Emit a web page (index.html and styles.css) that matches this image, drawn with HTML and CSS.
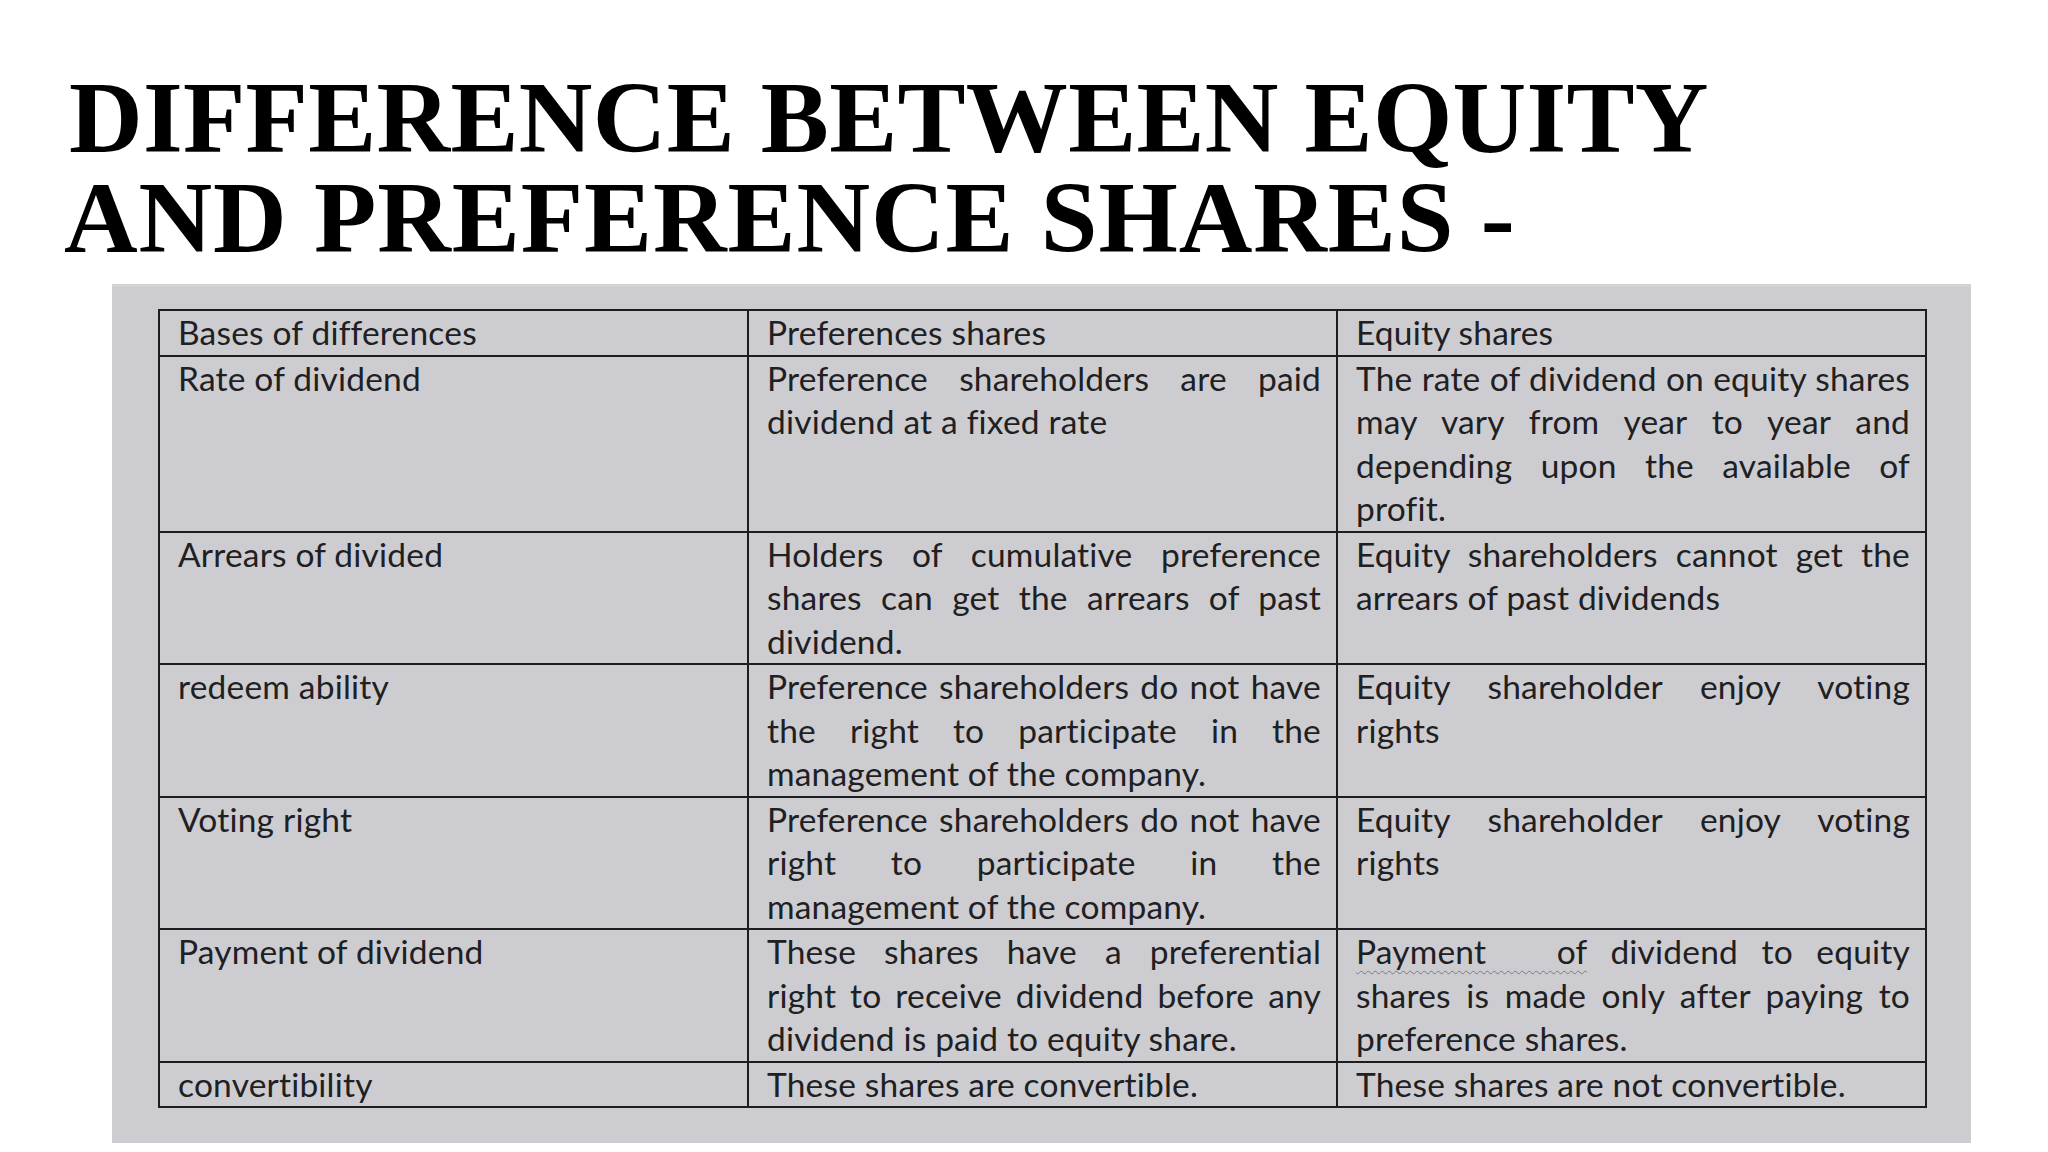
FILE: index.html
```html
<!DOCTYPE html>
<html>
<head>
<meta charset="utf-8">
<link rel="stylesheet" href="styles.css">
</head>
<body>
<h1 class="title"><span class="l1">DIFFERENCE BETWEEN EQUITY</span><br><span class="l2">AND PREFERENCE SHARES -</span></h1>
<div class="panel">
  <table class="cmp">
    <colgroup><col class="c"><col class="c"><col class="c"></colgroup>
    <tr>
      <td>Bases of differences</td>
      <td>Preferences shares</td>
      <td>Equity shares</td>
    </tr>
    <tr>
      <td>Rate of dividend</td>
      <td class="j"><span class="ln">Preference shareholders are paid</span><span class="ln">dividend at a fixed rate</span></td>
      <td class="j"><span class="ln">The rate of dividend on equity shares</span><span class="ln">may vary from year to year and</span><span class="ln">depending upon the available of</span><span class="ln">profit.</span></td>
    </tr>
    <tr>
      <td>Arrears of divided</td>
      <td class="j"><span class="ln">Holders of cumulative preference</span><span class="ln">shares can get the arrears of past</span><span class="ln">dividend.</span></td>
      <td class="j"><span class="ln">Equity shareholders cannot get the</span><span class="ln">arrears of past dividends</span></td>
    </tr>
    <tr>
      <td>redeem ability</td>
      <td class="j"><span class="ln">Preference shareholders do not have</span><span class="ln">the right to participate in the</span><span class="ln">management of the company.</span></td>
      <td class="j"><span class="ln">Equity shareholder enjoy voting</span><span class="ln">rights</span></td>
    </tr>
    <tr>
      <td>Voting right</td>
      <td class="j"><span class="ln">Preference shareholders do not have</span><span class="ln">right to participate in the</span><span class="ln">management of the company.</span></td>
      <td class="j"><span class="ln">Equity shareholder enjoy voting</span><span class="ln">rights</span></td>
    </tr>
    <tr>
      <td>Payment of dividend</td>
      <td class="j"><span class="ln">These shares have a preferential</span><span class="ln">right to receive dividend before any</span><span class="ln">dividend is paid to equity share.</span></td>
      <td class="j"><span class="ln"><span class="spell">Payment&nbsp;&nbsp; of</span> dividend to equity</span><span class="ln">shares is made only after paying to</span><span class="ln">preference shares.</span></td>
    </tr>
    <tr>
      <td>convertibility</td>
      <td>These shares are convertible.</td>
      <td>These shares are not convertible.</td>
    </tr>
  </table>
</div>
</body>
</html>
```

FILE: styles.css
```css
html, body {
  margin: 0;
  padding: 0;
  background: #ffffff;
}
body {
  width: 2048px;
  height: 1152px;
  overflow: hidden;
}
.title {
  margin: 0;
  padding: 68px 0 0 64px;
  height: 284px;
  box-sizing: border-box;
  font-family: "Liberation Serif", "Times New Roman", serif;
  font-weight: bold;
  font-size: 102px;
  line-height: 100px;
  color: #000;
}
.title .l1 { padding-left: 5px; letter-spacing: 0.3px; }
.title .l2 { letter-spacing: 0.9px; }
.panel {
  margin-left: 112px;
  width: 1859px;
  height: 859px;
  box-sizing: border-box;
  background: #cdcdd1;
  border-top: 3px solid #d3d3d6;
  padding: 22px 0 0 46px;
}
.cmp {
  border-collapse: collapse;
  table-layout: fixed;
  width: 1768px;
  font-family: Lato, "Liberation Sans", sans-serif;
  font-size: 33.5px;
  letter-spacing: 0.2px;
  font-variant-ligatures: none;
  line-height: 43.5px;
  color: #202022;
}
.cmp .c { width: 589px; }
.cmp td {
  border: 2px solid #1d1d1f;
  padding: 0 15px 0 18px;
  vertical-align: top;
  white-space: nowrap;
}
.cmp .ln { display: block; }
.cmp .j .ln { text-align: justify; text-align-last: justify; }
.cmp .j .ln:last-child { text-align-last: auto; }
.spell {
  text-decoration: underline wavy #7a7a86;
  text-decoration-thickness: 1px;
  text-underline-offset: 6px;
}
```
